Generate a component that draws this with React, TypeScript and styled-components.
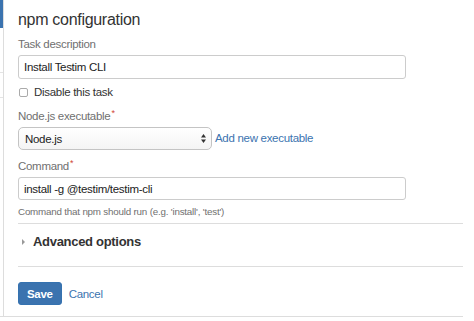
import React from 'react';
import styled, { createGlobalStyle } from 'styled-components';

const GlobalStyle = createGlobalStyle`
  html, body {
    margin: 0;
    padding: 0;
    background: #fff;
  }
  body {
    font-family: "Liberation Sans", Arial, sans-serif;
    color: #333;
    letter-spacing: -0.3px;
  }
`;

const Page = styled.div`
  display: flex;
  width: 463px;
  border-bottom: 1px solid #ddd;
`;

const Sidebar = styled.div`
  width: 3px;
  border-right: 1px solid #ddd;
  display: flex;
  flex-direction: column;
`;

const SidebarItem = styled.div<{ active?: boolean }>`
  height: ${(p) => (p.active ? '28px' : '24px')};
  background: ${(p) => (p.active ? '#3b73af' : 'transparent')};
  border-bottom: ${(p) => (p.active ? 'none' : '1px solid #e4e4e4')};
  margin-bottom: ${(p) => (p.active ? '20px' : '0')};
`;

const Panel = styled.div`
  flex: 1;
  padding: 8px 0 11px 14px;
  display: flex;
  flex-direction: column;
`;

const Title = styled.h2`
  margin: 0;
  font-size: 16px;
  line-height: 24px;
  font-weight: normal;
  color: #333;
`;

const Label = styled.label`
  display: block;
  margin-top: ${(p: { first?: boolean }) => (p.first ? '4px' : '8px')};
  font-size: 11.5px;
  line-height: 16px;
  color: #707070;
`;

const Required = styled.span`
  color: #d04437;
  font-size: 9px;
  line-height: 0;
  vertical-align: 4px;
  margin-left: 1px;
`;

const TextInput = styled.input<{ tall?: boolean }>`
  box-sizing: border-box;
  width: 388px;
  height: ${(p) => (p.tall ? '24px' : '23px')};
  margin: 3px 0 0;
  padding: 0 5px;
  border: 1px solid #ccc;
  border-radius: 3px;
  font-family: inherit;
  font-size: 11.5px;
  letter-spacing: -0.3px;
  color: #222;
  background: #fff;
  outline: none;
`;

const CheckRow = styled.div`
  display: flex;
  align-items: center;
  margin-top: 5px;
  height: 16px;
  font-size: 11.5px;
  color: #333;
`;

const CheckBox = styled.span`
  box-sizing: border-box;
  width: 9px;
  height: 9px;
  margin: 1px 6px 0 1px;
  border: 1px solid #aaa;
  border-radius: 2px;
  background: #fff;
`;

const SelectRow = styled.div`
  display: flex;
  align-items: flex-start;
  margin-top: 3px;
`;

const SelectWrap = styled.div`
  position: relative;
  width: 194px;
  height: 23px;
`;

const Select = styled.select`
  box-sizing: border-box;
  appearance: none;
  width: 100%;
  height: 100%;
  padding: 0 0 0 6px;
  border: 1px solid #c4c4c4;
  border-radius: 5px;
  background: linear-gradient(#fff, #f4f4f4);
  font-family: inherit;
  font-size: 11.5px;
  letter-spacing: -0.3px;
  color: #222;
  outline: none;
`;

const SelectArrows = styled.svg`
  position: absolute;
  right: 6px;
  top: 7px;
  pointer-events: none;
`;

const Link = styled.a`
  margin: 3px 0 0 3px;
  font-size: 11.5px;
  line-height: 16px;
  color: #3b73af;
  text-decoration: none;
`;

const Help = styled.div`
  margin-top: 5px;
  font-size: 9.8px;
  line-height: 14px;
  letter-spacing: -0.2px;
  color: #707070;
`;

const Divider = styled.hr`
  margin: ${(p: { top: number }) => p.top}px 0 0;
  border: 0;
  border-top: 1px solid #ddd;
  width: 100%;
`;

const Advanced = styled.div`
  display: flex;
  align-items: center;
  padding: 8px 0 16px 4px;
  height: 18px;
  font-size: 13px;
  font-weight: bold;
  color: #333;
`;

const Caret = styled.span`
  width: 0;
  height: 0;
  margin: 1px 8px 0 0;
  border-top: 3px solid transparent;
  border-bottom: 3px solid transparent;
  border-left: 3px solid #999;
`;

const Buttons = styled.div`
  display: flex;
  align-items: center;
  margin-top: 15px;
  height: 23px;
`;

const SaveButton = styled.button`
  box-sizing: border-box;
  height: 23px;
  padding: 0 8px;
  border: 1px solid #3572b0;
  border-radius: 3px;
  background: #3b73af;
  font-family: inherit;
  font-size: 11.5px;
  letter-spacing: -0.3px;
  font-weight: bold;
  color: #fff;
`;

const CancelLink = styled.a`
  margin-left: 7px;
  font-size: 11.5px;
  color: #3b73af;
  text-decoration: none;
`;

export default function App() {
  return (
    <>
      <GlobalStyle />
      <Page>
        <Sidebar>
          <SidebarItem active />
          <SidebarItem />
          <SidebarItem />
        </Sidebar>
        <Panel>
          <Title>npm configuration</Title>
          <Label first>Task description</Label>
          <TextInput tall defaultValue="Install Testim CLI" />
          <CheckRow>
            <CheckBox />
            Disable this task
          </CheckRow>
          <Label>
            Node.js executable<Required>*</Required>
          </Label>
          <SelectRow>
            <SelectWrap>
              <Select defaultValue="node">
                <option value="node">Node.js</option>
              </Select>
              <SelectArrows width="5" height="9" viewBox="0 0 5 9">
                <path d="M2.5 0 L5 3.5 L0 3.5 Z" fill="#333" />
                <path d="M0 5.5 L5 5.5 L2.5 9 Z" fill="#333" />
              </SelectArrows>
            </SelectWrap>
            <Link href="#">Add new executable</Link>
          </SelectRow>
          <Label>
            Command<Required>*</Required>
          </Label>
          <TextInput defaultValue="install -g @testim/testim-cli" />
          <Help>Command that npm should run (e.g. 'install', 'test')</Help>
          <Divider top={4} />
          <Advanced>
            <Caret />
            Advanced options
          </Advanced>
          <Divider top={0} />
          <Buttons>
            <SaveButton>Save</SaveButton>
            <CancelLink href="#">Cancel</CancelLink>
          </Buttons>
        </Panel>
      </Page>
    </>
  );
}
